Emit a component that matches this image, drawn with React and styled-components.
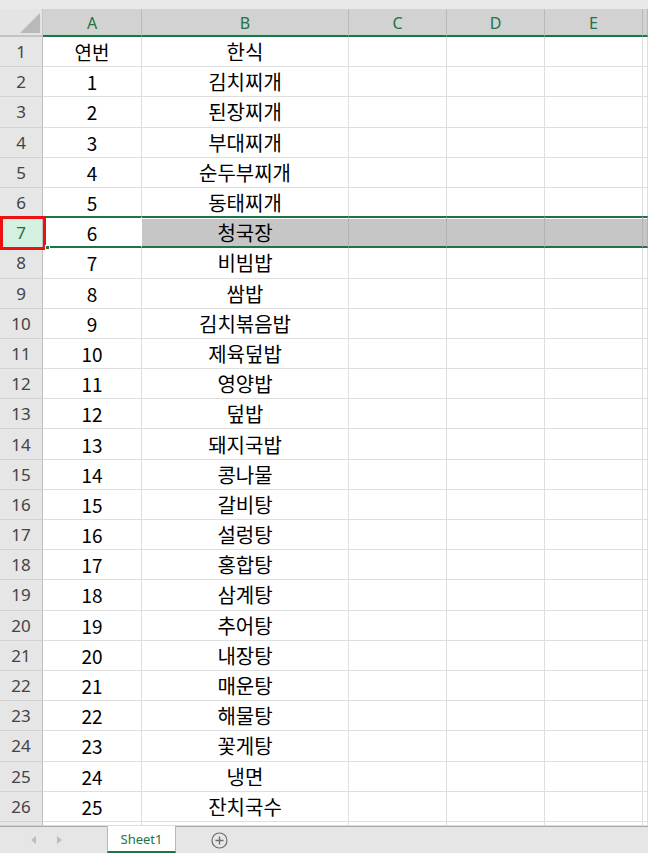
import styled, { createGlobalStyle, css } from "styled-components";

const GlobalStyle = createGlobalStyle`
  html, body {
    margin: 0;
    padding: 0;
    background: #ffffff;
  }
  * {
    box-sizing: border-box;
  }
`;

const COLS = "43px 99px 207px 98px 98px 98px 1fr";
const ROW_H = 30.19;

const foods = [
  "김치찌개", "된장찌개", "부대찌개", "순두부찌개", "동태찌개", "청국장",
  "비빔밥", "쌈밥", "김치볶음밥", "제육덮밥", "영양밥", "덮밥", "돼지국밥",
  "콩나물", "갈비탕", "설렁탕", "홍합탕", "삼계탕", "추어탕", "내장탕",
  "매운탕", "해물탕", "꽃게탕", "냉면", "잔치국수",
];

const SELECTED_ROW = 7;

const Page = styled.div`
  width: 648px;
  height: 853px;
  display: flex;
  flex-direction: column;
  overflow: hidden;
  background: #ffffff;
  font-family: "Noto Sans CJK KR", "Noto Sans", sans-serif;
`;

const TopStrip = styled.div`
  height: 9px;
  flex: none;
  background: #e9e9e9;
`;

const Sheet = styled.div`
  flex: 1;
  display: flex;
  flex-direction: column;
  overflow: hidden;
`;

const HeaderRow = styled.div`
  height: 28px;
  flex: none;
  display: grid;
  grid-template-columns: ${COLS};
`;

const Corner = styled.div`
  background: #e4e4e4;
  border-right: 1px solid #c8c8c8;
  border-bottom: 2px solid #c4c4c4;
  display: flex;
  align-items: flex-end;
  justify-content: flex-end;
  padding: 0 2px 2px 0;
`;

const ColHeader = styled.div`
  background: #d2d2d2;
  border-right: 1px solid #b9b9b9;
  border-bottom: 2px solid #217346;
  box-shadow: inset 0 -1px 0 #bfd9c9;
  display: flex;
  align-items: center;
  justify-content: center;
  color: #217346;
  font-family: "Noto Sans", "Open Sans", sans-serif;
  font-size: 16px;
  padding-top: 1px;
`;

const Row = styled.div`
  height: ${ROW_H}px;
  flex: none;
  display: grid;
  grid-template-columns: ${COLS};
  position: relative;
`;

const RowHeader = styled.div`
  position: relative;
  background: ${(p) => (p.$selected ? "#d3f0e0" : "#e6e6e6")};
  color: ${(p) => (p.$selected ? "#217346" : "#444444")};
  border-right: 1px solid #bdbdbd;
  border-bottom: 1px solid #d2d2d2;
  display: flex;
  align-items: center;
  justify-content: center;
  font-family: "Noto Sans", "Open Sans", sans-serif;
  font-size: 17px;
`;

const Cell = styled.div`
  border-right: 1px solid #dedede;
  border-bottom: 1px solid #dedede;
  display: flex;
  align-items: center;
  justify-content: center;
  color: #000000;
  font-size: ${(p) => p.$fs || 19}px;
  white-space: nowrap;
  overflow: hidden;
  background: #ffffff;
  ${(p) =>
    p.$selected &&
    css`
      border-top: 2px solid #217346;
      border-bottom: 2px solid #217346;
      box-shadow: inset 0 1px 0 #ffffff;
      margin-top: -2px;
      background: ${p.$active ? "#ffffff" : "#c6c6c6"};
      border-right-color: ${p.$active ? "#ffffff" : "#b2b2b2"};
    `}
`;

const Highlight = styled.div`
  position: absolute;
  left: 0;
  top: -2px;
  width: 46px;
  height: ${ROW_H + 4}px;
  border: 3px solid #ee1111;
  pointer-events: none;
  z-index: 2;
`;

const FillHandle = styled.div`
  position: absolute;
  left: 45px;
  bottom: -3px;
  width: 5px;
  height: 5px;
  background: #217346;
  border: 1px solid #ffffff;
  z-index: 3;
`;

const PartialRow = styled.div`
  flex: 1;
  display: grid;
  grid-template-columns: ${COLS};
`;

const TabBar = styled.div`
  height: 27px;
  flex: none;
  background: #e6e6e6;
  border-top: 1px solid #a8a8a8;
  display: flex;
  align-items: stretch;
`;

const NavArrows = styled.div`
  width: 107px;
  display: flex;
  align-items: center;
  padding-left: 31px;
  gap: 21px;
`;

const Tab = styled.div`
  width: 69px;
  margin-top: -1px;
  background: #ffffff;
  border-left: 1px solid #b8b8b8;
  border-right: 1px solid #b8b8b8;
  border-bottom: 2px solid #217346;
  display: flex;
  align-items: center;
  justify-content: center;
  color: #217346;
  font-family: "Noto Sans", "Open Sans", sans-serif;
  font-size: 13px;
`;

const AddSheet = styled.div`
  width: 86px;
  display: flex;
  align-items: center;
  justify-content: center;
`;

const Triangle = ({ dir }) => (
  <svg width="5" height="8" viewBox="0 0 5 8">
    {dir === "left" ? (
      <path d="M5 0 L0 4 L5 8 Z" fill="#bcbcbc" />
    ) : (
      <path d="M0 0 L5 4 L0 8 Z" fill="#bcbcbc" />
    )}
  </svg>
);

const PlusCircle = () => (
  <svg width="17" height="17" viewBox="0 0 17 17">
    <circle cx="8.5" cy="8.5" r="7.5" fill="none" stroke="#6d6d6d" strokeWidth="1.2" />
    <path d="M8.5 4.5 V12.5 M4.5 8.5 H12.5" stroke="#6d6d6d" strokeWidth="1.3" />
  </svg>
);

const CornerTriangle = () => (
  <svg width="20" height="20" viewBox="0 0 20 20">
    <path d="M20 0 L20 20 L0 20 Z" fill="#b9b9b9" />
  </svg>
);

export default function App() {
  const rows = [{ n: 1, a: "연번", b: "한식" }].concat(
    foods.map((f, i) => ({ n: i + 2, a: String(i + 1), b: f }))
  );

  return (
    <Page>
      <GlobalStyle />
      <TopStrip />
      <Sheet>
        <HeaderRow>
          <Corner>
            <CornerTriangle />
          </Corner>
          {["A", "B", "C", "D", "E", ""].map((c, i) => (
            <ColHeader key={i}>{c}</ColHeader>
          ))}
        </HeaderRow>
        {rows.map((r) => {
          const sel = r.n === SELECTED_ROW;
          return (
            <Row key={r.n}>
              <RowHeader $selected={sel}>
                {r.n}
                {sel && <Highlight />}
                {sel && <FillHandle />}
              </RowHeader>
              <Cell $selected={sel} $active={sel}>{r.a}</Cell>
              <Cell $selected={sel} $fs={20}>{r.b}</Cell>
              <Cell $selected={sel} />
              <Cell $selected={sel} />
              <Cell $selected={sel} />
              <Cell $selected={sel} />
            </Row>
          );
        })}
        <PartialRow>
          <RowHeader />
          <Cell />
          <Cell />
          <Cell />
          <Cell />
          <Cell />
          <Cell />
        </PartialRow>
      </Sheet>
      <TabBar>
        <NavArrows>
          <Triangle dir="left" />
          <Triangle dir="right" />
        </NavArrows>
        <Tab>Sheet1</Tab>
        <AddSheet>
          <PlusCircle />
        </AddSheet>
      </TabBar>
    </Page>
  );
}
